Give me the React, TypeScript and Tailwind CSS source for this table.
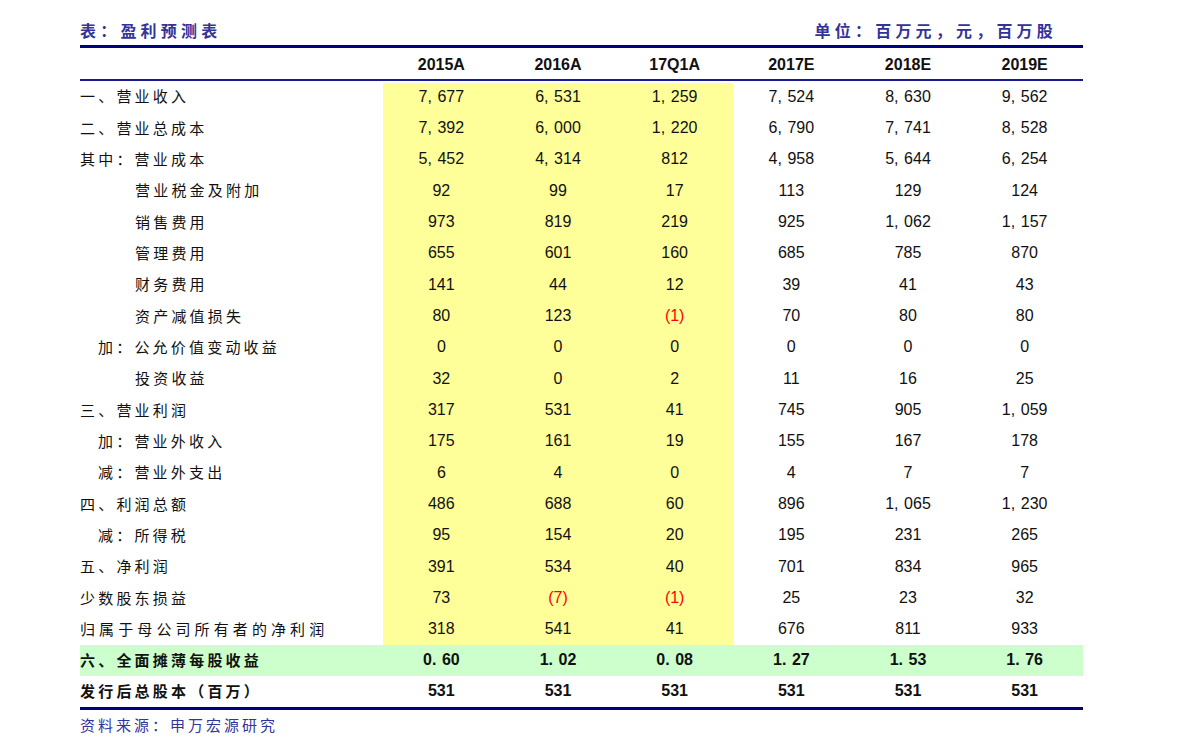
import React from "react";

type Row = [string, number, string[]];

const rows: Row[] = [
  ["一、营业收入", 0, ["7,677", "6,531", "1,259", "7,524", "8,630", "9,562"]],
  ["二、营业总成本", 0, ["7,392", "6,000", "1,220", "6,790", "7,741", "8,528"]],
  ["其中：营业成本", 0, ["5,452", "4,314", "812", "4,958", "5,644", "6,254"]],
  ["营业税金及附加", 2, ["92", "99", "17", "113", "129", "124"]],
  ["销售费用", 2, ["973", "819", "219", "925", "1,062", "1,157"]],
  ["管理费用", 2, ["655", "601", "160", "685", "785", "870"]],
  ["财务费用", 2, ["141", "44", "12", "39", "41", "43"]],
  ["资产减值损失", 2, ["80", "123", "(1)", "70", "80", "80"]],
  ["加：公允价值变动收益", 1, ["0", "0", "0", "0", "0", "0"]],
  ["投资收益", 2, ["32", "0", "2", "11", "16", "25"]],
  ["三、营业利润", 0, ["317", "531", "41", "745", "905", "1,059"]],
  ["加：营业外收入", 1, ["175", "161", "19", "155", "167", "178"]],
  ["减：营业外支出", 1, ["6", "4", "0", "4", "7", "7"]],
  ["四、利润总额", 0, ["486", "688", "60", "896", "1,065", "1,230"]],
  ["减：所得税", 1, ["95", "154", "20", "195", "231", "265"]],
  ["五、净利润", 0, ["391", "534", "40", "701", "834", "965"]],
  ["少数股东损益", 0, ["73", "(7)", "(1)", "25", "23", "32"]],
  ["归属于母公司所有者的净利润", 0, ["318", "541", "41", "676", "811", "933"]],
];

const headers = ["2015A", "2016A", "17Q1A", "2017E", "2018E", "2019E"];

const cjk = "font-['Noto_Sans_CJK_SC',sans-serif]";
const num = "font-['Liberation_Sans',Arial,sans-serif]";

function Num({ v }: { v: string }) {
  if (v.startsWith("(")) {
    return <span className="text-[#ff0000]">{v}</span>;
  }
  const parts: React.ReactNode[] = [];
  let buf = "";
  let k = 0;
  for (const ch of v) {
    if (ch === "," || ch === ".") {
      parts.push(<span key={k++}>{buf}</span>);
      parts.push(
        <span key={k++} className="inline-block w-[10px] text-left">
          {ch}
        </span>
      );
      buf = "";
    } else buf += ch;
  }
  parts.push(<span key={k++}>{buf}</span>);
  return <>{parts}</>;
}

const indent = ["pl-0", "pl-[18px]", "pl-[55px]"];

export default function App() {
  return (
    <div className="w-[1191px] h-[755px] bg-white">
      <div className="ml-[80px] w-[1003px] pt-[18px]">
        <div className={`flex justify-between h-[27px] items-start text-[#333399] font-bold text-[16px] leading-[24px] tracking-[4.2px] ${cjk}`}>
          <span>表：盈利预测表</span>
          <span className="pr-[26px]">单位：百万元，元，百万股</span>
        </div>
        <div className="border-t-[3px] border-[#000080]" />
        <div className="grid grid-cols-[303px_repeat(6,1fr)] h-[33px] pt-[2px] items-center border-b-2 border-[#1a1a90]">
          <div />
          {headers.map((h) => (
            <div key={h} className={`text-center font-bold text-[16px] text-[#111] ${num}`}>
              {h}
            </div>
          ))}
        </div>
        {rows.map(([label, lvl, vals], i) => (
          <div key={label} className="grid grid-cols-[303px_repeat(6,1fr)] h-[31.33px]">
            <div
              className={`flex items-center text-[15px] text-[#111] ${
                label.length > 12 ? "tracking-[4.1px]" : "tracking-[3.2px]"
              } ${cjk} ${indent[lvl]}`}
            >
              {label}
            </div>
            {vals.map((v, j) => (
              <div
                key={j}
                className={`flex items-center justify-center text-[16px] text-[#111] ${num} ${
                  j < 3 ? "bg-[#ffff99]" : ""
                } ${j < 3 && i === 0 ? "shadow-[inset_0_2px_0_white]" : ""}`}
              >
                <Num v={v} />
              </div>
            ))}
          </div>
        ))}
        <div className="grid grid-cols-[303px_repeat(6,1fr)] h-[31px] bg-[#ccffcc]">
          <div className={`flex items-center text-[15px] font-bold text-[#111] tracking-[3.2px] ${cjk}`}>
            六、全面摊薄每股收益
          </div>
          {["0.60", "1.02", "0.08", "1.27", "1.53", "1.76"].map((v, j) => (
            <div key={j} className={`flex items-center justify-center text-[16px] font-bold text-[#111] ${num}`}>
              <Num v={v} />
            </div>
          ))}
        </div>
        <div className="grid grid-cols-[303px_repeat(6,1fr)] h-[31px] border-b-[3px] border-[#000080] box-content">
          <div className={`flex items-center text-[15px] font-bold text-[#111] tracking-[3.2px] ${cjk}`}>
            发行后总股本（百万）
          </div>
          {headers.map((h) => (
            <div key={h} className={`flex items-center justify-center text-[16px] font-bold text-[#111] ${num}`}>
              531
            </div>
          ))}
        </div>
        <div className={`mt-[5px] h-[20px] leading-[20px] text-[15px] text-[#333399] tracking-[3px] ${cjk}`}>
          资料来源：申万宏源研究
        </div>
      </div>
    </div>
  );
}
